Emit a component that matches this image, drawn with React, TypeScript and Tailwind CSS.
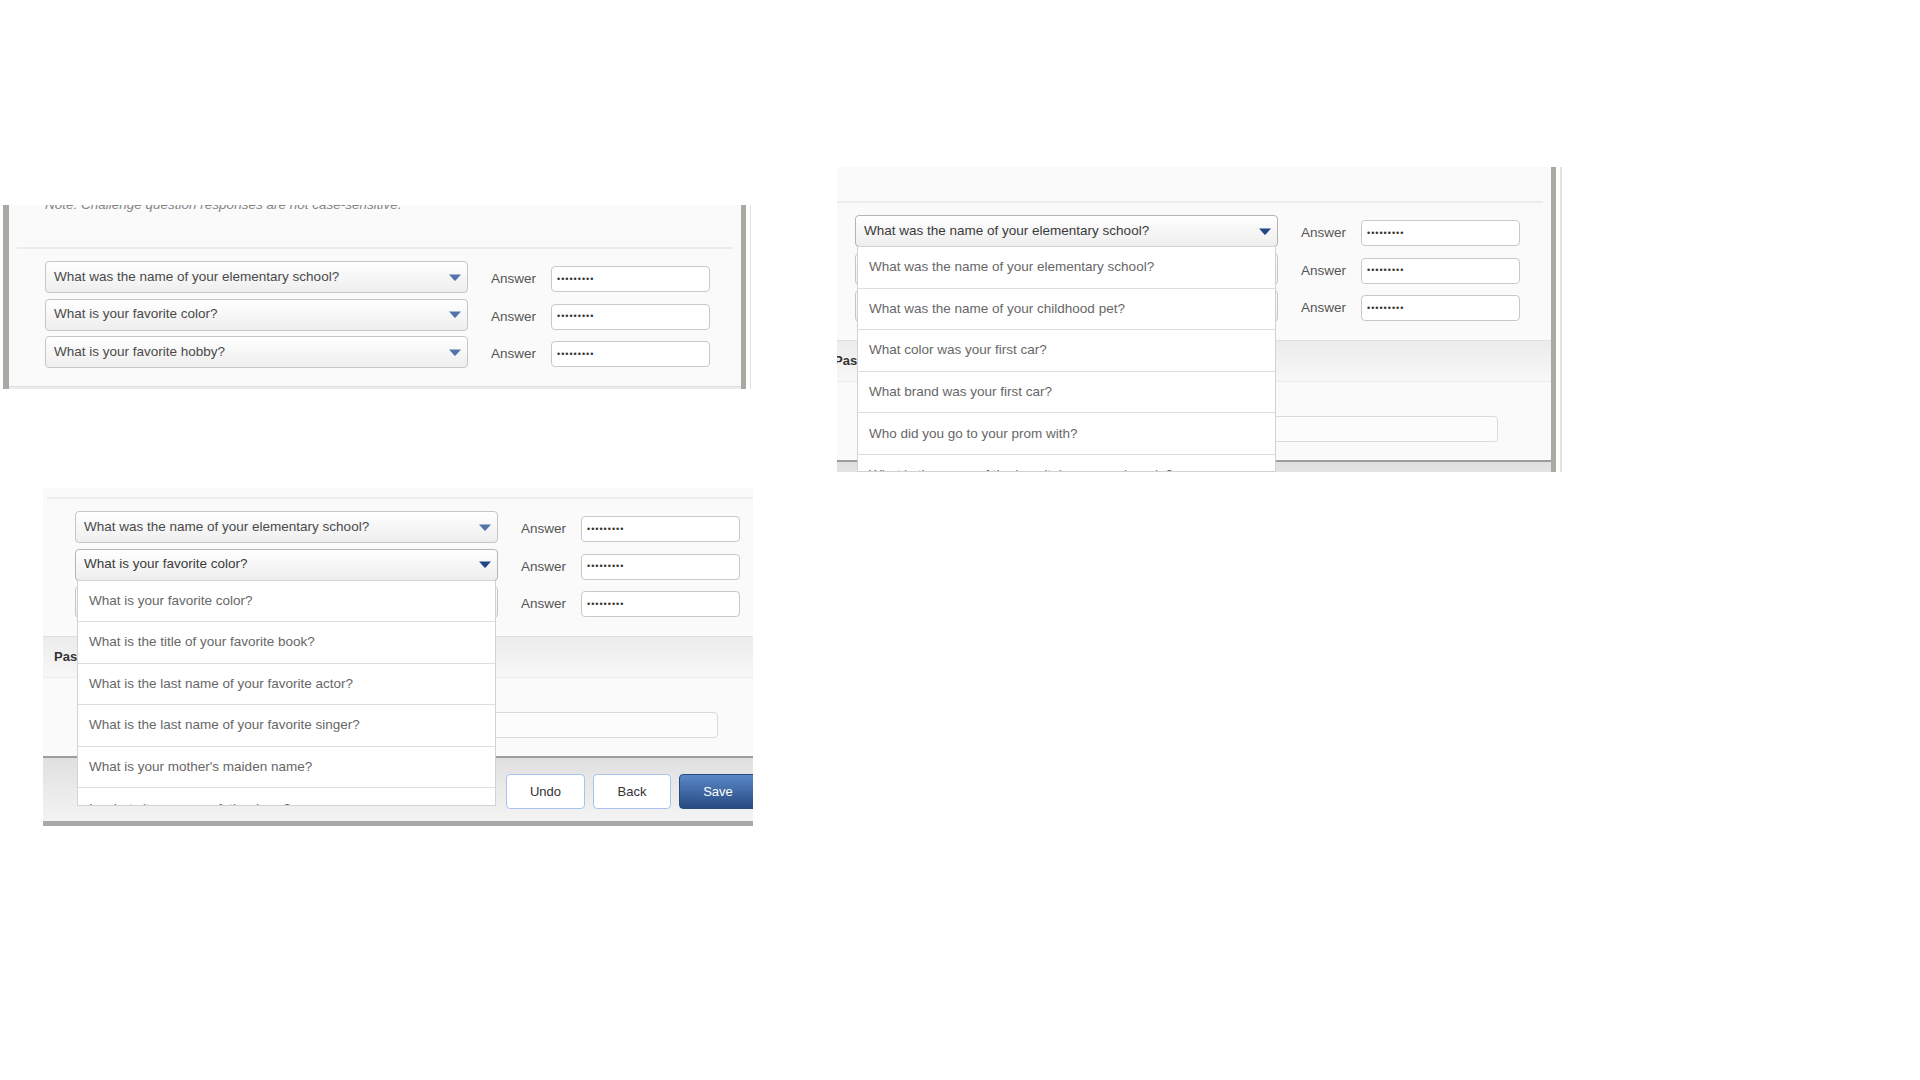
import React from 'react';

const schoolOptions = [
  'What was the name of your elementary school?',
  'What was the name of your childhood pet?',
  'What color was your first car?',
  'What brand was your first car?',
  'Who did you go to your prom with?',
  'What is the name of the hospital you were born in?',
];

const colorOptions = [
  'What is your favorite color?',
  'What is the title of your favorite book?',
  'What is the last name of your favorite actor?',
  'What is the last name of your favorite singer?',
  "What is your mother's maiden name?",
  'In what city was your father born?',
];

const questions = [
  'What was the name of your elementary school?',
  'What is your favorite color?',
  'What is your favorite hobby?',
];

const Arrow = ({ open }: { open: boolean }) => (
  <svg width="12" height="7" viewBox="0 0 12 7" className="shrink-0">
    <path d="M0 0.5 H12 L6.6 6.6 Q6 7.1 5.4 6.6 Z" fill={open ? '#1f4789' : '#5274aa'} />
  </svg>
);

const Dropdown = ({ options }: { options: string[] }) => (
  <div className="absolute left-[1px] top-full z-10 w-[419px] max-h-[226px] overflow-hidden bg-white border border-[#d2d2d2]">
    {options.map((o) => (
      <div
        key={o}
        className="h-[41.6px] shrink-0 flex items-center pl-[11px] border-b border-[#dedede] text-[13.5px] text-[#676767] whitespace-nowrap"
      >
        {o}
      </div>
    ))}
  </div>
);

const QuestionRow = ({ q, open, options }: { q: string; open: boolean; options: string[] }) => (
  <div className="flex items-start h-[32px]">
    <div
      className={`relative h-[32px] w-[423px] shrink-0 rounded-[4px] border bg-linear-to-b from-white to-[#eeeeee] flex items-center pl-[8px] pr-[6px] text-[13.5px] ${
        open ? 'border-[#b4b4b4] text-[#3a3a3a]' : 'border-[#c6c6c6] text-[#4a4a4a]'
      }`}
    >
      <span className="flex-1 whitespace-nowrap">{q}</span>
      <Arrow open={open} />
      {open && <Dropdown options={options} />}
    </div>
    <span className="ml-[23px] w-[60px] mt-[5px] leading-[26px] text-[13.5px] text-[#555]">Answer</span>
    <div className="mt-[5px] h-[26px] w-[159px] rounded-[4px] border border-[#c9c9c9] bg-white pl-[5px] flex items-center">
      <span className="text-[9px] tracking-[1px] text-[#333] leading-none">•••••••••</span>
    </div>
  </div>
);

const Form = ({ openIndex, options }: { openIndex: number | null; options: string[] }) => (
  <div className="flex w-[749px]">
    <div className="w-[6px] shrink-0 bg-[#a9a9a4]" />
    <div className="w-[732px] shrink-0 bg-[#fafafa] flex flex-col">
      {/* note */}
      <div className="h-[66px] pt-[16px] pl-[36px] text-[13.5px] leading-[16px] italic text-[#858585] whitespace-nowrap">
        Note: Challenge question responses are not case-sensitive.
      </div>
      <div className="mx-[8px] h-[2px] bg-[#ececec]" />

      {/* challenge questions */}
      <div className="pt-[12px] pb-[18px] pl-[36px] flex flex-col gap-[5.5px]">
        {questions.map((q, i) => (
          <QuestionRow key={q} q={q} open={openIndex === i} options={options} />
        ))}
      </div>

      {/* password section */}
      <div className="h-[42px] border-t border-[#e0e0e0] border-b border-b-[#ececec] bg-linear-to-b from-[#ececec] to-[#f7f7f7] flex items-center pl-[15px]">
        <span className="text-[13px] font-bold text-[#333]">Password</span>
      </div>
      <div className="h-[78px] pt-[34px] pl-[236px]">
        <div className="h-[26px] w-[443px] rounded-[4px] border border-[#dadada] bg-[#fcfcfc]" />
      </div>

      {/* footer */}
      <div className="h-[2px] bg-[#9d9d9d]" />
      <div className="h-[63px] bg-linear-to-b from-[#e0e0e0] to-[#f4f4f4] pt-[16px] pl-[467px] flex gap-[8px]">
        <button className="h-[35px] w-[79px] rounded-[4px] border border-[#a8c3ee] bg-white text-[13px] text-[#333]">
          Undo
        </button>
        <button className="h-[35px] w-[78px] rounded-[4px] border border-[#a8c3ee] bg-white text-[13px] text-[#333]">
          Back
        </button>
        <button className="h-[35px] w-[78px] rounded-[4px] border border-[#2b4a7b] bg-linear-to-b from-[#5b88c8] to-[#274b82] text-[13px] text-white">
          Save
        </button>
      </div>
      <div className="h-[5px] bg-[#a9a9a9]" />
    </div>
    <div className="w-[5px] shrink-0 bg-[#a9a9a4]" />
    <div className="w-[4px] shrink-0 bg-white" />
    <div className="w-[2px] shrink-0 bg-[#e2e2e2]" />
  </div>
);

export default function App() {
  return (
    <div className="w-[1920px] h-[1080px] bg-white font-['Liberation_Sans',Arial,sans-serif] overflow-hidden">
      <div className="flex items-start">
        <div className="ml-[3px] mt-[205px] w-[748px] h-[184px] shrink-0 overflow-hidden">
          <div className="-mt-[24px]">
            <Form openIndex={null} options={schoolOptions} />
          </div>
        </div>
        <div className="ml-[86px] mt-[167px] w-[726px] h-[305px] shrink-0 overflow-hidden">
          <div className="-ml-[24px] -mt-[32px]">
            <Form openIndex={0} options={schoolOptions} />
          </div>
        </div>
      </div>
      <div className="ml-[43px] mt-[16px] w-[710px] h-[339px] overflow-hidden">
        <div className="-ml-[10px] -mt-[57px]">
          <Form openIndex={1} options={colorOptions} />
        </div>
      </div>
    </div>
  );
}
